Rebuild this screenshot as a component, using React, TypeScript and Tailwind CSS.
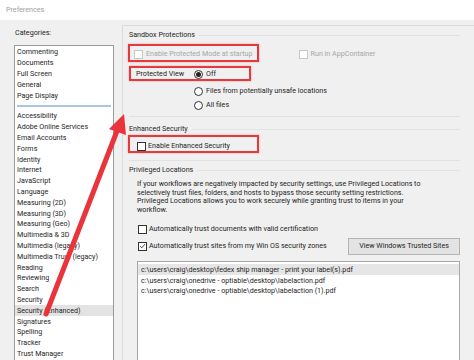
const categories = [
  "Commenting",
  "Documents",
  "Full Screen",
  "General",
  "Page Display",
  "-",
  "Accessibility",
  "Adobe Online Services",
  "Email Accounts",
  "Forms",
  "Identity",
  "Internet",
  "JavaScript",
  "Language",
  "Measuring (2D)",
  "Measuring (3D)",
  "Measuring (Geo)",
  "Multimedia & 3D",
  "Multimedia (legacy)",
  "Multimedia Trust (legacy)",
  "Reading",
  "Reviewing",
  "Search",
  "Security",
  "Security (Enhanced)",
  "Signatures",
  "Spelling",
  "Tracker",
  "Trust Manager",
];

const paths = [
  "c:\\users\\craig\\desktop\\fedex ship manager - print your label(s).pdf",
  "c:\\users\\craig\\onedrive - optiable\\desktop\\labelaction.pdf",
  "c:\\users\\craig\\onedrive - optiable\\desktop\\labelaction (1).pdf",
];

function Checkbox({ checked, disabled }: { checked?: boolean; disabled?: boolean }) {
  return (
    <span
      className={[
        "flex h-[9px] w-[9px] shrink-0 items-center justify-center border bg-white",
        disabled ? "border-[#c8c8c8]" : "border-[#333]",
      ].join(" ")}
    >
      {checked ? (
        <svg viewBox="0 0 10 10" className="h-[8px] w-[8px]">
          <path d="M1.5 5.2 4 7.6 8.6 2.4" fill="none" stroke="#222" strokeWidth="1.2" />
        </svg>
      ) : null}
    </span>
  );
}

function Radio({ checked }: { checked?: boolean }) {
  return (
    <span className="flex h-[9px] w-[9px] shrink-0 items-center justify-center rounded-full border border-[#333] bg-white">
      {checked ? <span className="h-[5px] w-[5px] rounded-full bg-[#222]" /> : null}
    </span>
  );
}

function GroupHeader({ title }: { title: string }) {
  return (
    <div className="flex h-[10px] items-center gap-[4px]">
      <span className="whitespace-nowrap">{title}</span>
      <span className="h-px flex-1 bg-[#e2e2e2]" />
    </div>
  );
}

export default function App() {
  return (
    <div
      className="relative h-[360px] w-[474px] overflow-hidden bg-[#f0f0f0] text-[7.15px] leading-[10px] text-[#1e1e1e]"
      style={{ fontFamily: "Roboto, 'Liberation Sans', sans-serif" }}
    >
      <div className="flex h-[20px] items-center bg-white pl-[6px] text-[#a0a0a0]">Preferences</div>

      <div className="flex">
        <div className="w-[122px] shrink-0 pl-[14px] pr-[8px] pt-[8px]">
          <div className="h-[10px] pl-[1px]">Categories:</div>
          <div className="mt-[7px] h-[320px] border border-[#9a9a9a] bg-white pt-[1px]">
            {categories.map((c) =>
              c === "-" ? (
                <div key="sep" className="flex h-[10px] items-center px-[2px]">
                  <span className="h-[1.5px] w-full bg-[#a9c7e2]" />
                </div>
              ) : (
                <div
                  key={c}
                  className={[
                    "flex h-[10.8px] items-center whitespace-nowrap pl-[2px]",
                    c === "Security (Enhanced)" ? "bg-[#e3e3e3]" : "",
                  ].join(" ")}
                >
                  {c}
                </div>
              )
            )}
          </div>
        </div>

        <div className="mt-[5px] h-[340px] flex-1 border-l border-t border-[#dcdcdc] pl-[6px] pr-[14px] pt-[4px]">
          <GroupHeader title="Sandbox Protections" />
          <div className="mt-[9px] flex h-[10px] items-center">
            <span className="ml-[5px]">
              <Checkbox disabled />
            </span>
            <span className="ml-[3px] text-[#a6a6a6]">Enable Protected Mode at startup</span>
            <span className="ml-[46px]">
              <Checkbox disabled />
            </span>
            <span className="ml-[3px] text-[#a6a6a6]">Run in AppContainer</span>
          </div>
          <div className="mt-[10px] flex h-[10px] items-center">
            <span className="ml-[7px] w-[58px]">Protected View</span>
            <Radio checked />
            <span className="ml-[3px]">Off</span>
          </div>
          <div className="ml-[65px] mt-[7px] flex h-[10px] items-center">
            <Radio />
            <span className="ml-[3px]">Files from potentially unsafe locations</span>
          </div>
          <div className="ml-[65px] mt-[4px] flex h-[10px] items-center">
            <Radio />
            <span className="ml-[3px]">All files</span>
          </div>
          <div className="mt-[6px] h-px bg-[#e2e2e2]" />

          <div className="mt-[7px]">
            <GroupHeader title="Enhanced Security" />
          </div>
          <div className="ml-[8px] mt-[7px] flex h-[10px] items-center">
            <Checkbox />
            <span className="ml-[2px]">Enable Enhanced Security</span>
          </div>
          <div className="mt-[9px] h-px bg-[#e2e2e2]" />

          <div className="mt-[4px]">
            <GroupHeader title="Privileged Locations" />
          </div>
          <p className="ml-[8px] mt-[5px] leading-[8.6px]">
            If your workflows are negatively impacted by security settings, use Privileged Locations to
            <br />
            selectively trust files, folders, and hosts to bypass those security setting restrictions.
            <br />
            Privileged Locations allows you to work securely while granting trust to items in your
            <br />
            workflow.
          </p>
          <div className="ml-[9px] mt-[10px] flex h-[10px] items-center">
            <Checkbox />
            <span className="ml-[2px]">Automatically trust documents with valid certification</span>
          </div>
          <div className="ml-[9px] mt-[3px] flex h-[18px] items-center">
            <Checkbox checked />
            <span className="ml-[2px]">Automatically trust sites from my Win OS security zones</span>
            <span className="ml-auto flex h-[17px] w-[112px] items-center justify-center border border-[#b4b4b4] bg-[#e3e3e3]">
              View Windows Trusted Sites
            </span>
          </div>
          <div className="ml-[8px] mt-[6px] h-[120px] border border-[#a8a8a8] bg-white pt-[2px] text-[#1e1e1e]">
            {paths.map((p, i) => (
              <div
                key={p}
                className={[
                  "flex h-[10.8px] items-center whitespace-nowrap pl-[3px]",
                  i === 0 ? "bg-[#e6e6e6]" : "",
                ].join(" ")}
              >
                {p}
              </div>
            ))}
          </div>
        </div>
      </div>

      {/* annotations */}
      <div className="absolute left-[128px] top-[44px] h-[18px] w-[131px] border-2 border-[#e5393e] shadow-[0_0_2px_rgba(229,57,62,0.4)]" />
      <div className="absolute left-[129px] top-[66px] h-[15px] w-[122px] border-2 border-[#e5393e] shadow-[0_0_2px_rgba(229,57,62,0.4)]" />
      <div className="absolute left-[128px] top-[135px] h-[18px] w-[131px] border-2 border-[#e5393e] shadow-[0_0_2px_rgba(229,57,62,0.4)]" />
      <svg className="pointer-events-none absolute left-0 top-0" width="474" height="360" viewBox="0 0 474 360">
        <line x1="46" y1="314" x2="117" y2="131" stroke="#e8343a" strokeWidth="5" strokeLinecap="round" />
        <polygon points="124,114 126,135 109,129" fill="#e8343a" />
      </svg>
    </div>
  );
}
